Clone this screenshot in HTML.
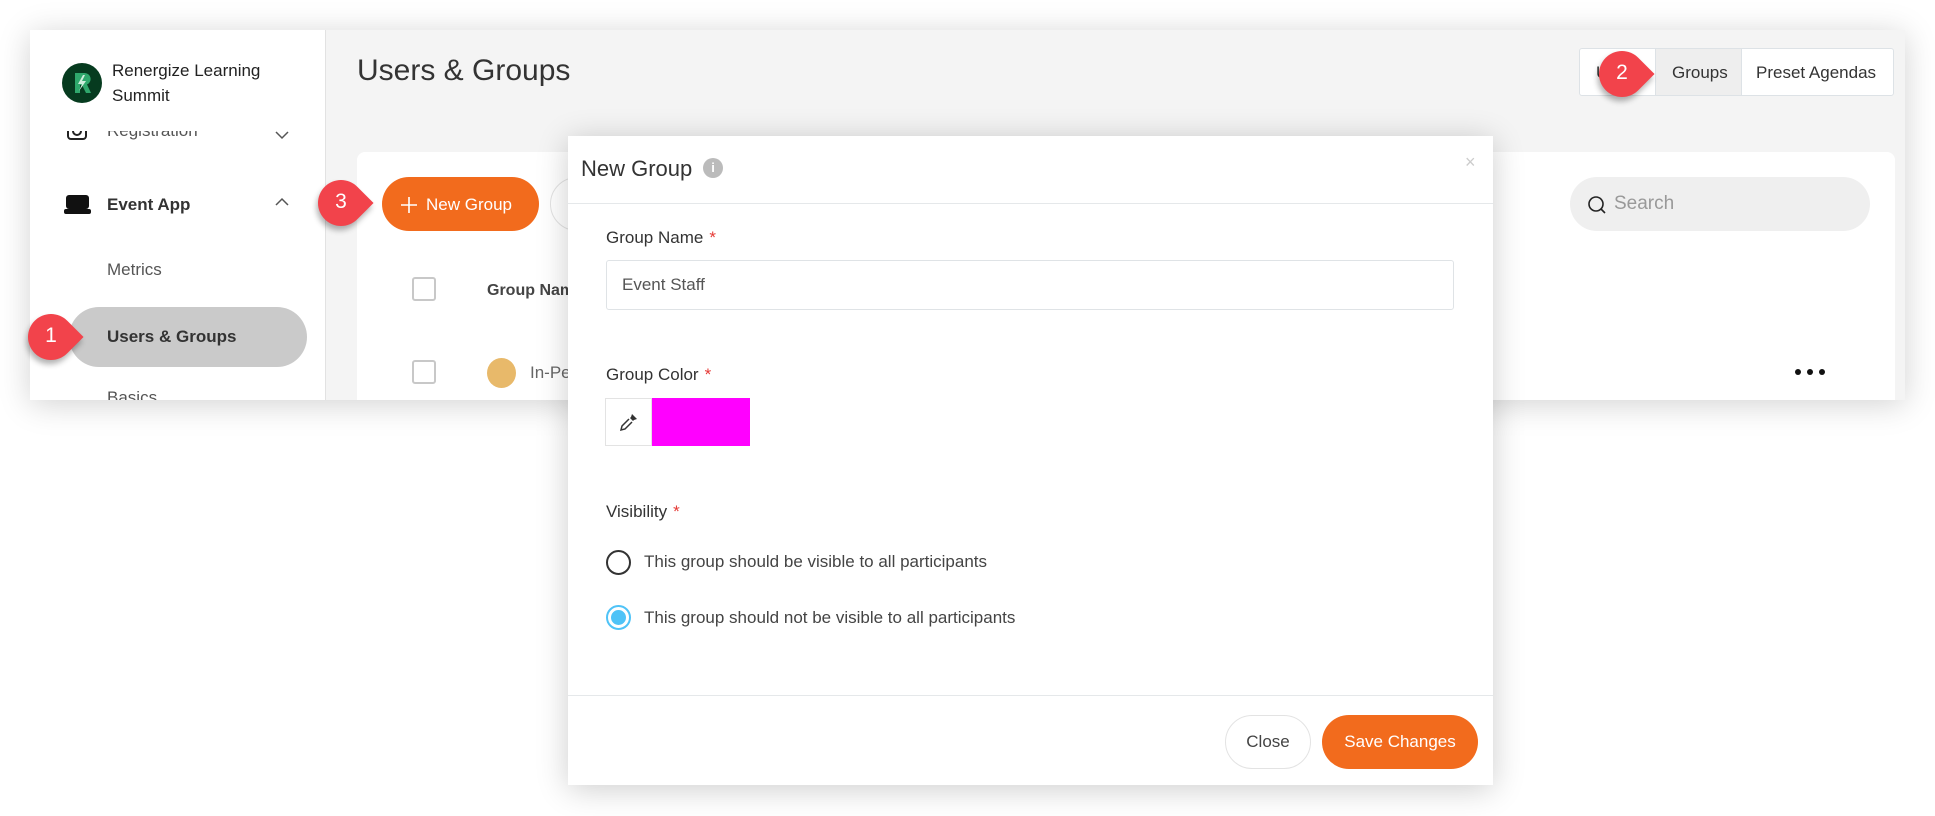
<!DOCTYPE html>
<html><head><meta charset="utf-8"><style>
*{box-sizing:border-box;margin:0;padding:0}
body{width:1935px;height:816px;background:#fff;font-family:"Liberation Sans",sans-serif;position:relative;overflow:hidden;color:#333}
.abs{position:absolute}
.win{left:30px;top:30px;width:1875px;height:370px;background:#f4f4f4;box-shadow:0 4px 30px rgba(0,0,0,.18);overflow:hidden}
.side{left:0;top:0;width:296px;height:370px;background:#fff;border-right:1px solid #e2e2e2;overflow:hidden}
.t{position:absolute;white-space:nowrap}
.badge{position:absolute;width:46px;height:46px;background:#f2434b;border-radius:50% 0 50% 50%;transform:rotate(45deg);box-shadow:2px 4px 6px rgba(0,0,0,.3)}
.bn{position:absolute;color:#fff;font-size:21px;width:46px;text-align:center}
.cb{position:absolute;width:24px;height:24px;border:2px solid #c8c8c8;border-radius:3px;background:#fff}
.modal{left:568px;top:136px;width:925px;height:649px;background:#fff;box-shadow:0 4px 30px rgba(0,0,0,.2)}
.lbl{position:absolute;left:38px;font-size:17px;color:#333}
.lbl b{color:#e53935;font-weight:normal;margin-left:6px}
.radio{position:absolute;left:38px;width:25px;height:25px;border-radius:50%}
.dot{position:absolute;width:6px;height:6px;border-radius:50%;background:#111}
</style></head><body>
<div class="abs win">
  <div class="abs side">
    <svg class="abs" style="left:35px;top:88px" width="24" height="24" viewBox="0 0 24 24"><rect x="3" y="4" width="18" height="17" rx="3" fill="none" stroke="#222" stroke-width="2"/><circle cx="12" cy="13" r="4" fill="none" stroke="#222" stroke-width="2"/></svg>
    <div class="t" style="left:77px;top:91px;font-size:17px;color:#555">Registration</div>
    <svg class="abs" style="left:245px;top:100px" width="14" height="10"><path d="M1 2l6 6 6-6" fill="none" stroke="#555" stroke-width="1.5"/></svg>
    <div class="t" style="left:0;top:80px;width:296px;height:21px;background:#fff"></div>
    <div class="abs" style="left:32px;top:33px;width:40px;height:40px;border-radius:50%;background:#063b1f"></div>
    <svg class="abs" style="left:32px;top:33px" width="40" height="40" viewBox="0 0 40 40"><path d="M13 10h10a6 6 0 0 1 2 11.5L29 30h-5l-4-8h-2v8h-5z" fill="#2fa86c"/><path d="M21 12l-5 9h4l-3 7 7-10h-4l3-6z" fill="#cfeedd"/></svg>
    <div class="t" style="left:82px;top:28px;font-size:17px;color:#222;line-height:25px">Renergize Learning<br>Summit</div>
    <svg class="abs" style="left:34px;top:164px" width="27" height="21" viewBox="0 0 27 21"><rect x="2" y="1" width="23" height="14" rx="3" fill="#111"/><rect x="0" y="15" width="27" height="5" rx="2" fill="#111"/></svg>
    <div class="t" style="left:77px;top:165px;font-size:17px;font-weight:bold;color:#333">Event App</div>
    <svg class="abs" style="left:245px;top:167px" width="14" height="10"><path d="M1 8l6-6 6 6" fill="none" stroke="#555" stroke-width="1.5"/></svg>
    <div class="t" style="left:77px;top:230px;font-size:17px;color:#555">Metrics</div>
    <div class="abs" style="left:39px;top:277px;width:238px;height:60px;border-radius:30px;background:#cacaca"></div>
    <div class="t" style="left:77px;top:297px;font-size:17px;font-weight:bold;color:#333">Users &amp; Groups</div>
    <div class="t" style="left:77px;top:358px;font-size:17px;color:#555">Basics</div>
  </div>
  <div class="t" style="left:327px;top:24px;font-size:30px;color:#333">Users &amp; Groups</div>
  <div class="abs" style="left:1549px;top:18px;width:315px;height:48px;background:#fff;border:1px solid #dde2e6;border-radius:3px;overflow:hidden">
    <div class="abs" style="left:75px;top:0;width:87px;height:48px;background:#eee;border-left:1px solid #dde2e6;border-right:1px solid #dde2e6"></div>
    <div class="t" style="left:16px;top:14px;font-size:17px">U</div>
    <div class="t" style="left:92px;top:14px;font-size:17px">Groups</div>
    <div class="t" style="left:176px;top:14px;font-size:17px">Preset Agendas</div>
  </div>
  <div class="abs" style="left:327px;top:122px;width:1538px;height:260px;background:#fff;border-radius:8px"></div>
  <div class="abs" style="left:352px;top:147px;width:157px;height:54px;border-radius:27px;background:#f26b1d"></div>
  <svg class="abs" style="left:370px;top:166px" width="18" height="18"><path d="M9 1v16M1 9h16" stroke="#fff" stroke-width="1.6"/></svg>
  <div class="t" style="left:396px;top:165px;font-size:17px;color:#fff">New Group</div>
  <div class="abs" style="left:520px;top:147px;width:60px;height:54px;border-radius:27px;border:1px solid #e3e3e3"></div>
  <div class="abs" style="left:1540px;top:147px;width:300px;height:54px;border-radius:27px;background:#efefef"></div>
  <svg class="abs" style="left:1557px;top:165px" width="20" height="20"><circle cx="9" cy="9" r="7" fill="none" stroke="#222" stroke-width="1.6"/><path d="M14 14l4 4" stroke="#222" stroke-width="1.6"/></svg>
  <div class="t" style="left:1584px;top:163px;font-size:19px;color:#999">Search</div>
  <div class="cb" style="left:382px;top:247px"></div>
  <div class="t" style="left:457px;top:252px;font-size:16px;font-weight:bold;color:#444">Group Name</div>
  <div class="cb" style="left:382px;top:330px"></div>
  <div class="abs" style="left:457px;top:328px;width:29px;height:30px;border-radius:50%;background:#e8b96a"></div>
  <div class="t" style="left:500px;top:333px;font-size:17px;color:#666">In-Person</div>
  <div class="dot" style="left:1765px;top:339px"></div><div class="dot" style="left:1777px;top:339px"></div><div class="dot" style="left:1789px;top:339px"></div>
</div>
<div class="badge" style="left:28px;top:314px"></div><div class="bn" style="left:28px;top:324px">1</div>
<div class="badge" style="left:318px;top:180px"></div><div class="bn" style="left:318px;top:190px">3</div>
<div class="badge" style="left:1599px;top:51px"></div><div class="bn" style="left:1599px;top:61px">2</div>

<div class="abs modal">
  <div class="t" style="left:13px;top:20px;font-size:22px;color:#333">New Group</div>
  <div class="abs" style="left:135px;top:22px;width:20px;height:20px;border-radius:50%;background:#bbb;color:#fff;font-size:13px;text-align:center;line-height:20px;font-weight:bold">i</div>
  <div class="t" style="left:897px;top:16px;font-size:18px;color:#ccc">×</div>
  <div class="abs" style="left:0;top:67px;width:925px;height:1px;background:#e5e8ea"></div>
  <div class="lbl" style="top:92px">Group Name<b>*</b></div>
  <div class="abs" style="left:38px;top:124px;width:848px;height:50px;border:1px solid #dfe3e6;border-radius:3px"></div>
  <div class="t" style="left:54px;top:139px;font-size:17px;color:#555">Event Staff</div>
  <div class="lbl" style="top:229px">Group Color<b>*</b></div>
  <div class="abs" style="left:37px;top:262px;width:47px;height:48px;border:1px solid #e3e3e3;background:#fff"></div>
  <svg class="abs" style="left:50px;top:275px" width="22" height="22" viewBox="0 0 22 22"><path d="M14 3l5 5-3 1-1 1-3-3 1-1z" fill="#333"/><path d="M11 8l-7 7-1 4 4-1 7-7" fill="none" stroke="#333" stroke-width="1.5"/></svg>
  <div class="abs" style="left:84px;top:262px;width:98px;height:48px;background:#f0f"></div>
  <div class="lbl" style="top:366px">Visibility<b>*</b></div>
  <div class="radio" style="top:414px;border:2px solid #333"></div>
  <div class="t" style="left:76px;top:416px;font-size:17px;color:#444">This group should be visible to all participants</div>
  <div class="radio" style="top:469px;border:2px solid #4fc3f7"><div class="abs" style="left:3px;top:3px;width:15px;height:15px;border-radius:50%;background:#4fc3f7"></div></div>
  <div class="t" style="left:76px;top:472px;font-size:17px;color:#444">This group should not be visible to all participants</div>
  <div class="abs" style="left:0;top:559px;width:925px;height:1px;background:#e5e8ea"></div>
  <div class="abs" style="left:657px;top:579px;width:86px;height:54px;border-radius:27px;border:1px solid #e3e3e3;text-align:center;line-height:52px;font-size:17px;color:#444">Close</div>
  <div class="abs" style="left:754px;top:579px;width:156px;height:54px;border-radius:27px;background:#f26b1d;text-align:center;line-height:54px;font-size:17px;color:#fff">Save Changes</div>
</div>
</body></html>
